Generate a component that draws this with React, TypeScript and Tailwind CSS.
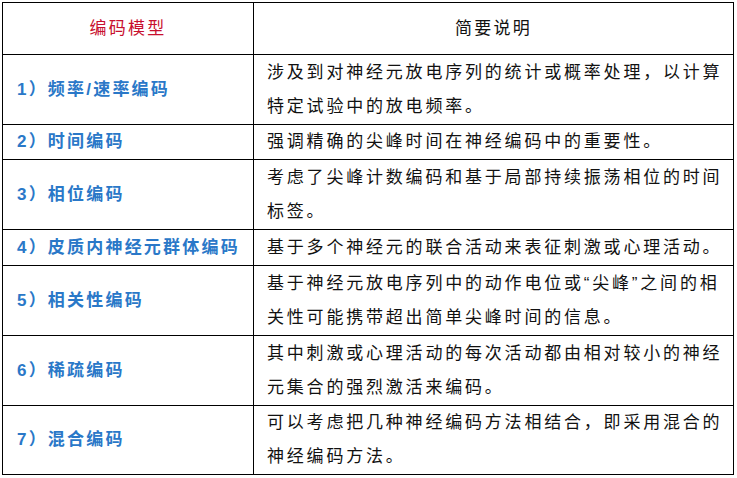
import React from "react";

const rows: { name: string; lines: string[]; h: string }[] = [
  { name: "1）频率/速率编码", lines: ["涉及到对神经元放电序列的统计或概率处理，以计算", "特定试验中的放电频率。"], h: "h-[70px]" },
  { name: "2）时间编码", lines: ["强调精确的尖峰时间在神经编码中的重要性。"], h: "h-[35px]" },
  { name: "3）相位编码", lines: ["考虑了尖峰计数编码和基于局部持续振荡相位的时间", "标签。"], h: "h-[70px]" },
  { name: "4）皮质内神经元群体编码", lines: ["基于多个神经元的联合活动来表征刺激或心理活动。"], h: "h-[36px]" },
  { name: "5）相关性编码", lines: ["基于神经元放电序列中的动作电位或“尖峰”之间的相", "关性可能携带超出简单尖峰时间的信息。"], h: "h-[70px]" },
  { name: "6）稀疏编码", lines: ["其中刺激或心理活动的每次活动都由相对较小的神经", "元集合的强烈激活来编码。"], h: "h-[70px]" },
  { name: "7）混合编码", lines: ["可以考虑把几种神经编码方法相结合，即采用混合的", "神经编码方法。"], h: "h-[69px]" },
];

export default function App() {
  return (
    <div className="w-[737px] h-[478px] bg-white pt-[2px] pl-[2px] font-['Liberation_Sans','Noto_Sans_CJK_SC',sans-serif]">
      <table className="w-[731px] table-fixed border-collapse border border-black">
        <colgroup>
          <col className="w-[251px]" />
          <col className="w-[480px]" />
        </colgroup>
        <tbody>
          <tr className="h-[52px]">
            <td className="border border-black text-center align-middle text-[17px] tracking-[2.2px] text-[#c8102e]">
              编码模型
            </td>
            <td className="border border-black text-center align-middle text-[17px] tracking-[2.2px] text-[#111]">
              简要说明
            </td>
          </tr>
          {rows.map((r) => (
            <tr key={r.name} className={r.h}>
              <td className="border border-black align-middle pl-[14px] text-[17px] leading-[34px] tracking-[2.2px] font-semibold text-[#2a78c8] whitespace-nowrap">
                {r.name}
              </td>
              <td className="border border-black align-middle pl-[13px] pr-[6px] text-[17px] tracking-[2.8px] leading-[34px] text-[#111] whitespace-nowrap">
                {r.lines.map((l, i) => (
                  <div key={i}>{l}</div>
                ))}
              </td>
            </tr>
          ))}
        </tbody>
      </table>
    </div>
  );
}
